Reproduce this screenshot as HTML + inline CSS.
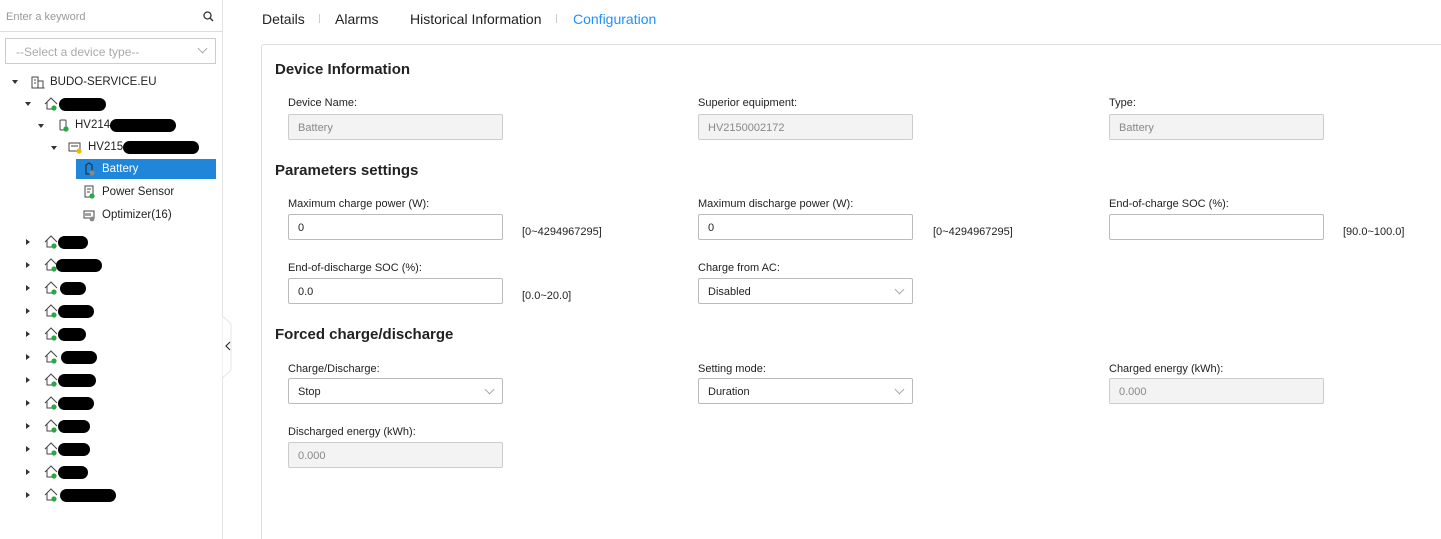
<!DOCTYPE html>
<html><head><meta charset="utf-8"><style>
*{box-sizing:border-box;margin:0;padding:0}
html{width:1441px;height:539px;overflow:hidden}
body{width:1441px;height:539px;overflow:hidden;background:#fff;font-family:"Liberation Sans",sans-serif;color:#333;position:relative}
.side{position:absolute;left:0;top:0;width:223px;height:539px;border-right:1px solid #e3e3e3}
.search{position:absolute;left:0;top:0;width:222px;height:32px;border-bottom:1px solid #ddd;font-size:11px;color:#999;padding:11px 6px}
.sel{position:absolute;left:5px;top:38px;width:211px;height:26px;border:1px solid #ccc;font-size:12px;color:#aaa;padding:6px 10px}
.row{position:absolute;height:20px;font-size:11.5px;color:#222;display:flex;align-items:center;white-space:nowrap}
.tri{position:absolute;width:0;height:0;border-left:3px solid transparent;border-right:3px solid transparent;border-top:4px solid #333}
.trir{position:absolute;width:0;height:0;border-top:3px solid transparent;border-bottom:3px solid transparent;border-left:4px solid #333}
.blob{display:inline-block;background:#000;border-radius:10px;height:13px}
.tabs{position:absolute;top:11px;font-size:14px;color:#222}
.card{position:absolute;left:261px;top:44px;width:1200px;height:500px;border:1px solid #ddd;border-radius:3px}
h2{position:absolute;left:275px;font-size:15px;font-weight:bold;color:#222}
.lb{position:absolute;font-size:11px;color:#222}
.in{position:absolute;width:215px;height:26px;border:1px solid #bbb;border-radius:2px;font-size:11px;padding:7px 9px;color:#222}
.in.d{background:#f3f3f3;color:#888;border-color:#ccc}
.rg{position:absolute;font-size:11px;color:#222}
.chev{position:absolute;right:9px;top:7px;width:7px;height:7px;border-right:1px solid #aaa;border-bottom:1px solid #aaa;transform:rotate(45deg)}
</style></head><body>
<div class="side">
<div class="search">Enter a keyword
<svg style="position:absolute;right:8px;top:11px" width="11" height="11" viewBox="0 0 11 11"><circle cx="4.5" cy="4.5" r="3.5" fill="none" stroke="#333" stroke-width="1.3"/><path d="M7 7l3 3" stroke="#333" stroke-width="1.4"/></svg></div>
<div class="sel">--Select a device type--<div class="chev" style="top:6px"></div></div>

<div class="tri" style="left:12px;top:80px"></div>
<div class="row" style="left:31px;top:72px"><svg width="14" height="14" viewBox="0 0 14 14"><path d="M1 13V2h6v11M7 6h5v7M0.5 13h13M3 5h2M3 8h2" fill="none" stroke="#444" stroke-width="1"/></svg><span style="margin-left:5px">BUDO-SERVICE.EU</span></div>

<div class="tri" style="left:25px;top:102px"></div>
<div class="row" style="left:44px;top:94px"><svg width="14" height="14" viewBox="0 0 14 14"><path d="M1 7L7 1l6 6M3 5v7h5" fill="none" stroke="#444" stroke-width="1"/><circle cx="10" cy="11" r="2.6" fill="#27a845"/></svg><span class="blob" style="width:47px;margin-left:1px"></span></div>

<div class="tri" style="left:38px;top:124px"></div>
<div class="row" style="left:58px;top:115px"><svg width="12" height="14" viewBox="0 0 12 14"><rect x="2" y="2" width="6" height="10" rx="1" fill="none" stroke="#444"/><circle cx="8" cy="11" r="2.6" fill="#27a845"/></svg><span style="margin-left:5px">HV214</span><span class="blob" style="width:66px"></span></div>

<div class="tri" style="left:51px;top:146px"></div>
<div class="row" style="left:68px;top:137px"><svg width="14" height="14" viewBox="0 0 14 14"><rect x="1" y="3" width="11" height="8" fill="none" stroke="#444"/><path d="M3 6h7" stroke="#444"/><circle cx="11" cy="11" r="2.6" fill="#f2b700"/></svg><span style="margin-left:6px">HV215</span><span class="blob" style="width:76px"></span></div>

<div style="position:absolute;left:76px;top:159px;width:140px;height:20px;background:#1f86d9"></div>
<div class="row" style="left:83px;top:159px;color:#fff"><svg width="13" height="14" viewBox="0 0 13 14"><path d="M3 12V3l3-2 3 2v9z" fill="none" stroke="#222"/><circle cx="9" cy="11" r="2.6" fill="#888"/></svg><span style="margin-left:6px">Battery</span></div>
<div class="row" style="left:83px;top:182px"><svg width="13" height="14" viewBox="0 0 13 14"><rect x="2" y="1" width="8" height="11" fill="none" stroke="#444"/><path d="M4 4h4M4 7h3" stroke="#444"/><circle cx="9" cy="11" r="2.6" fill="#27a845"/></svg><span style="margin-left:6px">Power Sensor</span></div>
<div class="row" style="left:83px;top:205px"><svg width="13" height="14" viewBox="0 0 13 14"><rect x="1" y="3" width="10" height="7" fill="none" stroke="#444"/><path d="M3 5v3M5 5v3M7 5v3" stroke="#444"/><circle cx="9" cy="11" r="2.4" fill="#888"/></svg><span style="margin-left:6px">Optimizer(16)</span></div>

<div class="trir" style="left:26px;top:239px"></div><div class="row" style="left:44px;top:232px"><svg width="14" height="14" viewBox="0 0 14 14"><path d="M1 7L7 1l6 6M3 5v7h5" fill="none" stroke="#444"/><circle cx="10" cy="11" r="2.6" fill="#27a845"/></svg><span class="blob" style="width:30px"></span></div>
<div class="trir" style="left:26px;top:262px"></div><div class="row" style="left:44px;top:255px"><svg width="14" height="14" viewBox="0 0 14 14"><path d="M1 7L7 1l6 6M3 5v7h5" fill="none" stroke="#444"/><circle cx="10" cy="11" r="2.6" fill="#27a845"/></svg><span class="blob" style="width:46px;margin-left:-2px"></span></div>
<div class="trir" style="left:26px;top:285px"></div><div class="row" style="left:44px;top:278px"><svg width="14" height="14" viewBox="0 0 14 14"><path d="M1 7L7 1l6 6M3 5v7h5" fill="none" stroke="#444"/><circle cx="10" cy="11" r="2.6" fill="#27a845"/></svg><span class="blob" style="width:26px;margin-left:2px"></span></div>
<div class="trir" style="left:26px;top:308px"></div><div class="row" style="left:44px;top:301px"><svg width="14" height="14" viewBox="0 0 14 14"><path d="M1 7L7 1l6 6M3 5v7h5" fill="none" stroke="#444"/><circle cx="10" cy="11" r="2.6" fill="#27a845"/></svg><span class="blob" style="width:36px"></span></div>
<div class="trir" style="left:26px;top:331px"></div><div class="row" style="left:44px;top:324px"><svg width="14" height="14" viewBox="0 0 14 14"><path d="M1 7L7 1l6 6M3 5v7h5" fill="none" stroke="#444"/><circle cx="10" cy="11" r="2.6" fill="#27a845"/></svg><span class="blob" style="width:28px"></span></div>
<div class="trir" style="left:26px;top:354px"></div><div class="row" style="left:44px;top:347px"><svg width="14" height="14" viewBox="0 0 14 14"><path d="M1 7L7 1l6 6M3 5v7h5" fill="none" stroke="#444"/><circle cx="10" cy="11" r="2.6" fill="#27a845"/></svg><span class="blob" style="width:36px;margin-left:3px"></span></div>
<div class="trir" style="left:26px;top:377px"></div><div class="row" style="left:44px;top:370px"><svg width="14" height="14" viewBox="0 0 14 14"><path d="M1 7L7 1l6 6M3 5v7h5" fill="none" stroke="#444"/><circle cx="10" cy="11" r="2.6" fill="#27a845"/></svg><span class="blob" style="width:38px"></span></div>
<div class="trir" style="left:26px;top:400px"></div><div class="row" style="left:44px;top:393px"><svg width="14" height="14" viewBox="0 0 14 14"><path d="M1 7L7 1l6 6M3 5v7h5" fill="none" stroke="#444"/><circle cx="10" cy="11" r="2.6" fill="#27a845"/></svg><span class="blob" style="width:36px"></span></div>
<div class="trir" style="left:26px;top:423px"></div><div class="row" style="left:44px;top:416px"><svg width="14" height="14" viewBox="0 0 14 14"><path d="M1 7L7 1l6 6M3 5v7h5" fill="none" stroke="#444"/><circle cx="10" cy="11" r="2.6" fill="#27a845"/></svg><span class="blob" style="width:32px"></span></div>
<div class="trir" style="left:26px;top:446px"></div><div class="row" style="left:44px;top:439px"><svg width="14" height="14" viewBox="0 0 14 14"><path d="M1 7L7 1l6 6M3 5v7h5" fill="none" stroke="#444"/><circle cx="10" cy="11" r="2.6" fill="#27a845"/></svg><span class="blob" style="width:32px"></span></div>
<div class="trir" style="left:26px;top:469px"></div><div class="row" style="left:44px;top:462px"><svg width="14" height="14" viewBox="0 0 14 14"><path d="M1 7L7 1l6 6M3 5v7h5" fill="none" stroke="#444"/><circle cx="10" cy="11" r="2.6" fill="#27a845"/></svg><span class="blob" style="width:30px"></span></div>
<div class="trir" style="left:26px;top:492px"></div><div class="row" style="left:44px;top:485px"><svg width="14" height="14" viewBox="0 0 14 14"><path d="M1 7L7 1l6 6M3 5v7h5" fill="none" stroke="#444"/><circle cx="10" cy="11" r="2.6" fill="#27a845"/></svg><span class="blob" style="width:56px;margin-left:2px"></span></div>
</div>
<svg style="position:absolute;left:222px;top:316px" width="12" height="62" viewBox="0 0 12 62"><path d="M0.5 0L9 8v46l-8.5 8" fill="#fff" stroke="#e6e6e6"/><path d="M8 26l-4 4 4 4" fill="none" stroke="#333" stroke-width="1.2"/></svg>

<div class="tabs" style="left:262px">Details</div>
<div style="position:absolute;left:319px;top:14px;width:1px;height:9px;background:#ccc"></div>
<div class="tabs" style="left:335px">Alarms</div>
<div class="tabs" style="left:410px">Historical Information</div>
<div style="position:absolute;left:556px;top:14px;width:1px;height:9px;background:#ccc"></div>
<div class="tabs" style="left:573px;color:#1e90ff">Configuration</div>

<div class="card"></div>
<h2 style="top:61px">Device Information</h2>
<div class="lb" style="left:288px;top:97px">Device Name:</div>
<div class="in d" style="left:288px;top:114px">Battery</div>
<div class="lb" style="left:698px;top:97px">Superior equipment:</div>
<div class="in d" style="left:698px;top:114px">HV2150002172</div>
<div class="lb" style="left:1109px;top:97px">Type:</div>
<div class="in d" style="left:1109px;top:114px">Battery</div>

<h2 style="top:162px">Parameters settings</h2>
<div class="lb" style="left:288px;top:198px">Maximum charge power (W):</div>
<div class="in" style="left:288px;top:214px">0</div>
<div class="rg" style="left:522px;top:226px">[0~4294967295]</div>
<div class="lb" style="left:698px;top:198px">Maximum discharge power (W):</div>
<div class="in" style="left:698px;top:214px">0</div>
<div class="rg" style="left:933px;top:226px">[0~4294967295]</div>
<div class="lb" style="left:1109px;top:198px">End-of-charge SOC (%):</div>
<div class="in" style="left:1109px;top:214px"></div>
<div class="rg" style="left:1343px;top:226px">[90.0~100.0]</div>

<div class="lb" style="left:288px;top:262px">End-of-discharge SOC (%):</div>
<div class="in" style="left:288px;top:278px">0.0</div>
<div class="rg" style="left:522px;top:290px">[0.0~20.0]</div>
<div class="lb" style="left:698px;top:262px">Charge from AC:</div>
<div class="in" style="left:698px;top:278px">Disabled<div class="chev"></div></div>

<h2 style="top:326px">Forced charge/discharge</h2>
<div class="lb" style="left:288px;top:363px">Charge/Discharge:</div>
<div class="in" style="left:288px;top:378px">Stop<div class="chev"></div></div>
<div class="lb" style="left:698px;top:363px">Setting mode:</div>
<div class="in" style="left:698px;top:378px">Duration<div class="chev"></div></div>
<div class="lb" style="left:1109px;top:363px">Charged energy (kWh):</div>
<div class="in d" style="left:1109px;top:378px">0.000</div>
<div class="lb" style="left:288px;top:426px">Discharged energy (kWh):</div>
<div class="in d" style="left:288px;top:442px">0.000</div>
</body></html>
